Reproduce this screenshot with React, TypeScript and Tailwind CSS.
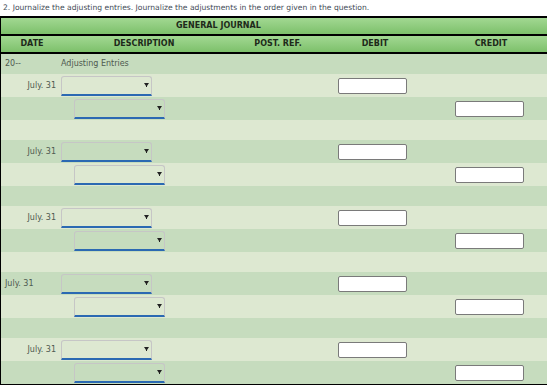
import React from 'react';

type Line = { date?: string; dateLeft?: boolean; kind: 'debit' | 'credit' | 'blank' | 'year' };

// one entry = debit line, credit line, spacer
const entries = [
  { date: 'July. 31' },
  { date: 'July. 31' },
  { date: 'July. 31' },
  { date: 'July. 31', dateLeft: true },
  { date: 'July. 31' },
];

const lines: Line[] = [{ kind: 'year' }];
entries.forEach((e, i) => {
  lines.push({ kind: 'debit', date: e.date, dateLeft: e.dateLeft });
  lines.push({ kind: 'credit' });
  if (i < entries.length - 1) lines.push({ kind: 'blank' });
});

function Picker({ indent }: { indent?: boolean }) {
  return (
    <div className={`relative w-[91px] ${indent ? 'ml-[15px]' : 'ml-[2px]'}`}>
      <select
        defaultValue=""
        className="block h-[20px] w-[91px] appearance-none rounded-t-[3px] border border-[#c6c6c6] border-b-2 border-b-[#2b69b2] bg-transparent outline-none"
      >
        <option value=""></option>
      </select>
      <svg className="pointer-events-none absolute right-[3px] top-[7px]" width="5" height="4" viewBox="0 0 5 4">
        <path d="M0 0h5L3 3v1H2V3z" fill="#222" />
      </svg>
    </div>
  );
}

function Amount() {
  return (
    <input
      type="text"
      className="block h-[16px] w-[69px] rounded-[2px] border border-[#7a7a7a] bg-white outline-none"
    />
  );
}

export default function App() {
  return (
    <div
      className="h-[385px] w-[547px] overflow-hidden bg-white"
      style={{ fontFamily: '"DejaVu Sans", Verdana, sans-serif' }}
    >
      <div className="h-[16px] pl-[3px] pt-[3px] text-[7.6px] leading-[10px] text-[#3f4b57]">
        2. Journalize the adjusting entries. Journalize the adjustments in the order given in the question.
      </div>

      <div className="w-[562px] border-l border-black">
        {/* title bar */}
        <div className="h-[20px] border-y-2 border-black bg-gradient-to-b from-[#a2d892] to-[#7dc06b] pl-[175px] text-[8px] font-bold leading-[16px] text-[#1e2a1a]">
          GENERAL JOURNAL
        </div>
        {/* column heads */}
        <div className="flex h-[18px] border-b-2 border-black bg-gradient-to-b from-[#a2d892] to-[#7dc06b] text-center text-[8px] font-bold leading-[16px] text-[#1e2a1a]">
          <div className="w-[58px] pl-[4px]">DATE</div>
          <div className="w-[170px]">DESCRIPTION</div>
          <div className="w-[98px]">POST. REF.</div>
          <div className="w-[96px]">DEBIT</div>
          <div className="w-[136px]">CREDIT</div>
        </div>

        {lines.map((ln, i) => {
          const bg = i % 2 === 0 ? 'bg-[#c6dcbe]' : 'bg-[#dde8d1]';
          const h = ln.kind === 'year' ? 'h-[20px]' : ln.kind === 'blank' ? 'h-[20px]' : 'h-[23px]';
          return (
            <div key={i} className={`flex items-center ${h} ${bg} text-[8px] text-[#4e5a50]`}>
              <div className={`w-[58px] ${ln.dateLeft || ln.kind === 'year' ? 'pl-[4px] text-left' : 'pr-[3px] text-right'}`}>
                {ln.kind === 'year' ? '20--' : ln.date}
              </div>
              <div className="w-[170px]">
                {ln.kind === 'year' && <span className="pl-[2px]">Adjusting Entries</span>}
                {ln.kind === 'debit' && <Picker />}
                {ln.kind === 'credit' && <Picker indent />}
              </div>
              <div className="w-[98px]" />
              <div className="w-[96px] pl-[11px]">{ln.kind === 'debit' && <Amount />}</div>
              <div className="w-[136px] pl-[32px]">{ln.kind === 'credit' && <Amount />}</div>
            </div>
          );
        })}
        <div className="h-[2px] bg-black" />
      </div>
    </div>
  );
}
